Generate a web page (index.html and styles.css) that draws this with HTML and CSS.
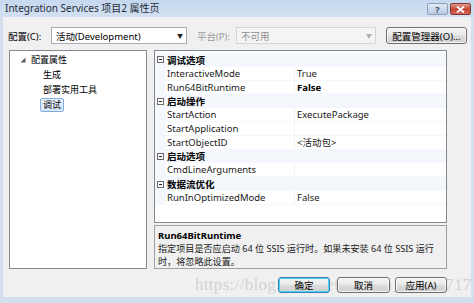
FILE: index.html
```html
<!DOCTYPE html>
<html>
<head>
<meta charset="utf-8">
<link rel="stylesheet" href="styles.css">
</head>
<body>
<div class="window">
  <div class="titlebar">
    <span class="title">Integration Services 项目2 属性页</span>
    <div class="caption-btns">
      <span class="cbtn help">?</span>
      <span class="cbtn close">
        <svg width="9" height="7" viewBox="0 0 9 7"><path d="M1 0.5 L8 6.5 M8 0.5 L1 6.5" stroke="#fff" stroke-width="1.8"/></svg>
      </span>
    </div>
  </div>
  <div class="client">
    <div class="config-row">
      <span class="lbl lbl-config">配置(C):</span>
      <div class="combo combo-config"><span>活动(Development)</span><span class="arrow">▼</span></div>
      <span class="lbl lbl-platform">平台(P):</span>
      <div class="combo combo-platform disabled"><span>不可用</span><span class="arrow">▼</span></div>
      <button class="btn btn-manager">配置管理器(O)...</button>
    </div>
    <div class="main">
      <div class="tree">
        <div class="tnode root">
          <svg class="expander" width="6" height="6" viewBox="0 0 6 6"><polygon points="5.5,0.5 5.5,5.5 0.5,5.5" fill="#5a5a5a"/></svg>
          <span>配置属性</span>
        </div>
        <div class="tnode child"><span>生成</span></div>
        <div class="tnode child"><span>部署实用工具</span></div>
        <div class="tnode child"><span class="selected">调试</span></div>
      </div>
      <div class="right">
        <div class="grid">
          <div class="cat"><span class="minus"></span><span class="cat-name">调试选项</span></div>
          <div class="prop"><span class="gutter"></span><span class="name">InteractiveMode</span><span class="val">True</span></div>
          <div class="prop"><span class="gutter"></span><span class="name">Run64BitRuntime</span><span class="val bold">False</span></div>
          <div class="cat"><span class="minus"></span><span class="cat-name">启动操作</span></div>
          <div class="prop"><span class="gutter"></span><span class="name">StartAction</span><span class="val">ExecutePackage</span></div>
          <div class="prop"><span class="gutter"></span><span class="name">StartApplication</span><span class="val"></span></div>
          <div class="prop"><span class="gutter"></span><span class="name">StartObjectID</span><span class="val">&lt;活动包&gt;</span></div>
          <div class="cat"><span class="minus"></span><span class="cat-name">启动选项</span></div>
          <div class="prop"><span class="gutter"></span><span class="name">CmdLineArguments</span><span class="val"></span></div>
          <div class="cat"><span class="minus"></span><span class="cat-name">数据流优化</span></div>
          <div class="prop"><span class="gutter"></span><span class="name">RunInOptimizedMode</span><span class="val">False</span></div>
        </div>
        <div class="desc">
          <div class="desc-title">Run64BitRuntime</div>
          <div class="desc-line">指定项目是否应启动 64 位 SSIS 运行时。如果未安装 64 位 SSIS 运行</div>
          <div class="desc-line">时，将忽略此设置。</div>
        </div>
      </div>
    </div>
    <div class="btn-row">
      <button class="btn btn-ok">确定</button>
      <button class="btn btn-cancel">取消</button>
      <button class="btn btn-apply">应用(A)</button>
    </div>
  </div>
  <div class="watermark">https://blog.csdn.net/weixin_41590717</div>
</div>
</body>
</html>
```

FILE: styles.css
```css
html, body {
  margin: 0;
  padding: 0;
}
body {
  width: 474px;
  height: 303px;
  overflow: hidden;
}
.window {
  position: relative;
  width: 474px;
  height: 303px;
  box-sizing: border-box;
  background: #d3dfec;
  display: flex;
  flex-direction: column;
  font-family: "Noto Sans", "Noto Sans CJK SC", sans-serif;
  font-size: 9.5px;
  color: #000;
  overflow: hidden;
}
.titlebar {
  height: 17px;
  flex: none;
  display: flex;
  align-items: center;
  justify-content: space-between;
  background: linear-gradient(#c6d8ee, #d2e0f1);
  padding: 0 3px 0 5px;
}
.title {
  font-size: 10px;
  color: #1e2a3a;
  line-height: 17px;
  margin-top: -1px;
}
.caption-btns {
  display: flex;
  gap: 2px;
  align-self: flex-start;
  margin-top: 3px;
}
.cbtn {
  height: 12px;
  box-sizing: border-box;
  border: 1px solid #8ca0bb;
  border-radius: 2px;
  display: flex;
  align-items: center;
  justify-content: center;
}
.help {
  width: 21px;
  background: linear-gradient(#e0e9f4, #bccbe0);
  color: #3c4f6a;
  font-size: 9px;
  font-weight: bold;
}
.close {
  width: 21px;
  background: linear-gradient(#e49a8d, #c74432 55%, #d2685a);
  border-color: #7e3a33;
}
.client {
  flex: 1;
  margin: 0 3px 6px 3px;
  background: #f0f0f0;
  padding: 10px 3px 0 6px;
  display: flex;
  flex-direction: column;
}
.config-row {
  display: flex;
  align-items: center;
  height: 17px;
}
.lbl {
  flex: none;
}
.lbl-config {
  width: 43px;
  margin-left: -1px;
}
.lbl-platform {
  width: 39px;
  margin-left: 10px;
  color: #9a9a9a;
}
.combo {
  height: 17px;
  box-sizing: border-box;
  border: 1px solid #a9acb4;
  background: #fff;
  display: flex;
  align-items: center;
  justify-content: space-between;
  padding: 0 3px 0 4px;
  flex: none;
}
.combo-config {
  width: 136px;
}
.combo-platform {
  width: 140px;
}
.combo.disabled {
  background: #f4f4f4;
  border-color: #d5d5d5;
  color: #8e8e8e;
}
.arrow {
  font-size: 6px;
  color: #222;
}
.disabled .arrow {
  color: #b0b0b0;
}
.btn {
  font-family: "Noto Sans", "Noto Sans CJK SC", sans-serif;
  font-size: 9.5px;
  color: #000;
  height: 17px;
  box-sizing: border-box;
  border: 1px solid #707070;
  border-radius: 3px;
  background: linear-gradient(#f3f3f3 0%, #ebebeb 45%, #dddddd 50%, #cfcfcf 100%);
  padding: 0;
  margin: 0;
  display: flex;
  align-items: center;
  justify-content: center;
  box-shadow: inset 0 0 0 1px rgba(255,255,255,0.7);
}
.btn-manager {
  width: 81px;
  margin-left: 10px;
}
.main {
  display: flex;
  gap: 7px;
  margin-top: 6px;
  height: 219px;
}
.tree {
  width: 138px;
  box-sizing: border-box;
  border: 1px solid #828790;
  background: #fff;
  padding-top: 1px;
  font-size: 9px;
}
.tnode {
  height: 15px;
  display: flex;
  align-items: center;
}
.tnode.root {
  padding-left: 10px;
}
.expander {
  margin-right: 5px;
}
.tnode.child {
  padding-left: 30px;
}
.tnode.child span {
  padding: 0 2px;
  border: 1px solid transparent;
  line-height: 12px;
}
.tnode.child .selected {
  border-color: #84acdd;
  border-radius: 2px;
  background: linear-gradient(#eaf3fd, #d5e6fb);
}
.right {
  width: 293px;
  display: flex;
  flex-direction: column;
  gap: 2px;
}
.grid {
  height: 174px;
  box-sizing: border-box;
  border: 1px solid #828790;
  background: #fff;
  padding-top: 2px;
}
.cat, .prop {
  height: 13.8px;
  display: flex;
  align-items: center;
}
.cat {
  background: #f4f7fc;
}
.minus {
  width: 7px;
  height: 7px;
  box-sizing: border-box;
  border: 1px solid #6d6d6d;
  margin-left: 2px;
  margin-right: 3px;
  position: relative;
  background: #fff;
}
.minus::after {
  content: "";
  position: absolute;
  left: 1px;
  right: 1px;
  top: 2px;
  height: 1px;
  background: #222;
}
.cat-name {
  font-weight: bold;
}
.prop .gutter {
  width: 11px;
  align-self: stretch;
  background: #f4f7fc;
  flex: none;
}
.prop .name {
  width: 129px;
  align-self: stretch;
  display: flex;
  align-items: center;
  padding-left: 1px;
  border-right: 1px solid #f0f0f0;
  border-bottom: 1px solid #f4f7fc;
  box-sizing: border-box;
  color: #1a1a1a;
}
.prop .val {
  flex: 1;
  align-self: stretch;
  display: flex;
  align-items: center;
  padding-left: 2px;
  border-bottom: 1px solid #f4f7fc;
  box-sizing: border-box;
  color: #1a1a1a;
}
.val.bold {
  font-weight: bold;
  color: #000;
}
.desc {
  flex: 1;
  box-sizing: border-box;
  border: 1px solid #a0a0a0;
  background: #f0f0f0;
  padding: 3px 0 0 3px;
  line-height: 13px;
}
.desc-title {
  font-weight: bold;
}
.desc-line {
  white-space: nowrap;
  color: #1a1a1a;
  font-size: 9.1px;
}
.btn-row {
  display: flex;
  justify-content: flex-end;
  margin-top: 8px;
  margin-right: 21px;
  position: relative;
  z-index: 2;
}
.btn-ok, .btn-cancel, .btn-apply {
  height: 16px;
}
.btn-ok {
  width: 52px;
  border-color: #3c7fb1;
  box-shadow: inset 0 0 0 1px #48d3fb;
}
.btn-cancel {
  width: 53px;
  margin-left: 7px;
}
.btn-apply {
  width: 52px;
  margin-left: 5px;
}
.watermark {
  position: absolute;
  left: 195px;
  top: 275px;
  font-family: "Liberation Serif", serif;
  font-size: 17px;
  letter-spacing: 0.3px;
  color: rgba(190, 190, 190, 0.6);
  white-space: nowrap;
  z-index: 1;
  pointer-events: none;
}
```
